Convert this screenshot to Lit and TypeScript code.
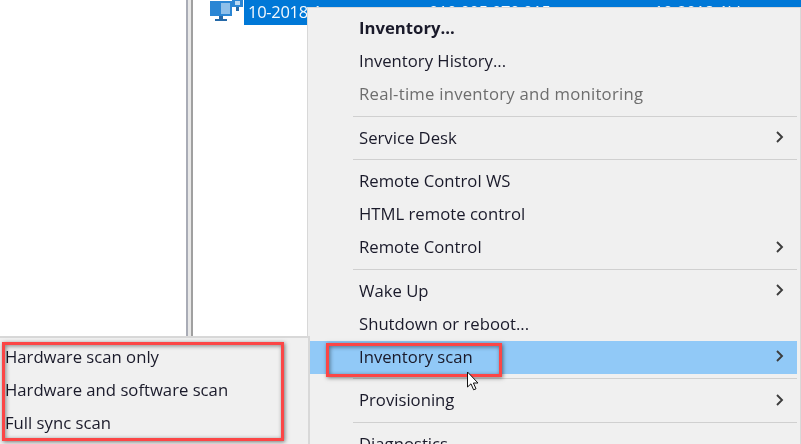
import { LitElement, html, css, nothing } from "lit";
import { customElement } from "lit/decorators.js";

type Item = { t?: string; bold?: boolean; off?: boolean; sub?: boolean; hot?: boolean; sep?: boolean };
const ITEMS: Item[] = [
  { t: "Inventory...", bold: true },
  { t: "Inventory History..." },
  { t: "Real-time inventory and monitoring", off: true },
  { sep: true },
  { t: "Service Desk", sub: true },
  { sep: true },
  { t: "Remote Control WS" },
  { t: "HTML remote control" },
  { t: "Remote Control", sub: true },
  { sep: true },
  { t: "Wake Up", sub: true },
  { t: "Shutdown or reboot..." },
  { t: "Inventory scan", sub: true, hot: true },
  { sep: true },
  { t: "Provisioning", sub: true },
  { sep: true },
  { t: "Diagnostics" },
];

@customElement("app-root")
export class AppRoot extends LitElement {
  static styles = css`
    :host { display: block; width: 801px; height: 444px; position: relative; overflow: hidden; background: #fff;
      font-family: "Open Sans", "Noto Sans", sans-serif; font-size: 16.7px; color: #1a1a2a; }
    .canvas { position: absolute; inset: 0; filter: blur(0.35px); }
    .split { position: absolute; left: 186px; top: 0; width: 7px; height: 340px; box-sizing: border-box;
      border-left: 2px solid #a9acb6; border-right: 2px solid #a0a0a0; background: #e8e8e8; }
    .row { position: absolute; left: 210px; top: 0; display: flex; align-items: flex-start; }
    .row svg { display: block; }
    .sel { position: relative; background: #0078d7; color: #f4f9fd; height: 25px; padding-left: 4px; box-sizing: border-box;
      line-height: 24px; white-space: nowrap; width: 591px; font-size: 16.5px; letter-spacing: -0.3px; }
    .cell { position: absolute; top: 0; }
    .c1 { left: 185px; }
    .c2 { left: 410px; }
    .menu { position: absolute; left: 307px; top: 7px; width: 494px; height: 460px; box-sizing: border-box;
      background: #f0f0f0; border: 1px solid #d8d8d8; padding: 4px 3px 0 2px; }
    .item { height: 33px; display: flex; align-items: center; padding: 0 13px 2px 49px; box-sizing: border-box; white-space: nowrap; }
    .item.b { font-weight: 700; }
    .item.off { color: #6d6d6d; letter-spacing: 0.24px; }
    .item.hot { background: #91c9f7; }
    .item svg { margin-left: auto; }
    .sep { height: 10.5px; display: flex; align-items: center; padding-left: 43px; }
    .sep i { display: block; height: 1px; flex: 1; background: #d0d0d0; }
    .sub { position: absolute; left: 0; top: 336px; width: 310px; height: 108px; box-sizing: border-box;
      background: #f0f0f0; border: 2px solid #d8d8d8; border-left: 0; border-bottom: 0; padding-top: 4px; }
    .sub div { height: 33px; line-height: 29px; padding-left: 5px; white-space: nowrap; }
    .mark { position: absolute; box-sizing: border-box; border: 3px solid #fb4646; box-shadow: 1px 1px 4px rgba(0,0,0,.5), inset 1px 1px 4px rgba(0,0,0,.45); }
    .m1 { left: 2px; top: 342px; width: 282px; height: 99px; }
    .m2 { left: 326px; top: 343px; width: 176px; height: 34px; }
    .cursor { position: absolute; left: 466px; top: 371px; }
  `;
  render() {
    return html`
      <div class="canvas">
        <div class="split"></div>
        <div class="row">
          <svg width="34" height="22" viewBox="0 0 34 22">
            <rect x="0" y="1" width="22" height="15" fill="#2b86d4"/>
            <rect x="11" y="3" width="9" height="11" fill="#8fc0ea"/>
            <rect x="9" y="16" width="4" height="3" fill="#2569a8"/>
            <rect x="5" y="19" width="12" height="2" fill="#2569a8"/>
            <rect x="22" y="0" width="11" height="7" fill="#2b86d4"/>
            <rect x="25" y="1" width="5" height="4" fill="#b9d8f2"/>
            <rect x="26" y="7" width="3" height="4" fill="#2569a8"/>
          </svg>
          <div class="sel">10-2018-1<span class="cell c1">010.005.070.015</span><span class="cell c2">10-2018-1) laptop</span></div>
        </div>
        <div class="menu">
          ${ITEMS.map((i) =>
            i.sep
              ? html`<div class="sep"><i></i></div>`
              : html`<div class="item ${i.bold ? "b" : ""} ${i.off ? "off" : ""} ${i.hot ? "hot" : ""}">
                  ${i.t}
                  ${i.sub
                    ? html`<svg width="8" height="12" viewBox="0 0 8 12"><path d="M1 1l5 5-5 5" fill="none" stroke="#3c3c3c" stroke-width="1.9"/></svg>`
                    : nothing}
                </div>`
          )}
        </div>
        <div class="sub">
          <div>Hardware scan only</div>
          <div>Hardware and software scan</div>
          <div>Full sync scan</div>
        </div>
        <div class="mark m1"></div>
        <div class="mark m2"></div>
        <svg class="cursor" width="15" height="21" viewBox="0 0 15 21">
          <path d="M1.5 1v15l3.5-3.2 2.6 6 2.4-1-2.6-5.8h4.6z" fill="#fff" stroke="#111" stroke-width="1"/>
        </svg>
      </div>
    `;
  }
}
